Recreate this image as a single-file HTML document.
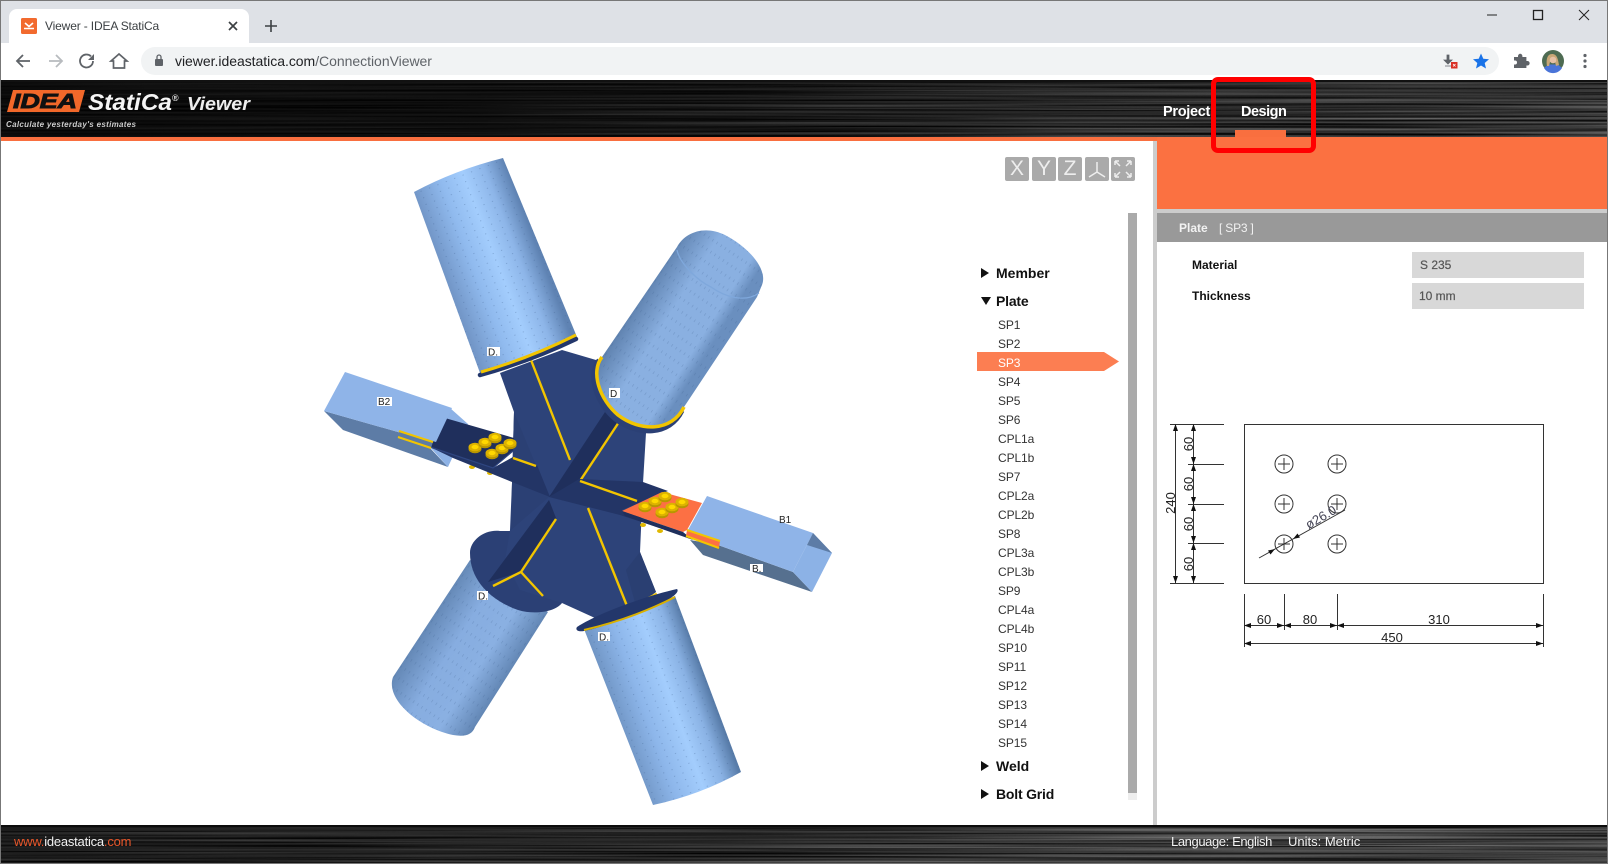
<!DOCTYPE html>
<html><head><meta charset="utf-8"><title>Viewer - IDEA StatiCa</title>
<style>
html,body{margin:0;padding:0;width:1608px;height:864px;overflow:hidden;background:#fff;font-family:"Liberation Sans",sans-serif}
.a{position:absolute}
.t{position:absolute;white-space:nowrap;line-height:16px}
.btn{position:absolute;top:157px;width:24px;height:24px;background:#aaa;border-radius:2px;color:#eee;font-size:21px;line-height:24px;text-align:center}
.m{position:absolute;left:996px;font-weight:bold;font-size:14px;color:#111;line-height:16px}
.list{position:absolute;left:998px;top:316px;font-size:12px;line-height:19px;color:#333;letter-spacing:-.1px}
.list div{height:19px}
</style></head>
<body>
<div class="a" style="left:0;top:0;width:1608px;height:43px;background:#dee1e6"></div>
<div class="a" style="left:9px;top:9px;width:240px;height:34px;background:#fff;border-radius:8px 8px 0 0"></div>
<div class="a" style="left:0;top:43px;width:1608px;height:37px;background:#fff"></div>
<div class="a" style="left:141px;top:47px;width:1358px;height:28px;background:#f1f3f4;border-radius:14px"></div>
<svg class="a" style="left:21px;top:18px" width="16" height="16" viewBox="0 0 16 16"><rect width="16" height="16" rx="1.5" fill="#f26a2e"/><path d="M3 10.5H13M4 5l4 3.5L12 5" fill="none" stroke="#fff" stroke-width="1.6"/></svg>
<div class="t" style="left:45px;top:18px;font-size:12px;color:#3c4043;letter-spacing:-.15px">Viewer - IDEA StatiCa</div>
<svg class="a" style="left:226px;top:19px" width="14" height="14" viewBox="0 0 14 14"><path d="M3 3l8 8M11 3l-8 8" stroke="#3c4043" stroke-width="1.7" fill="none"/></svg>
<svg class="a" style="left:264px;top:19px" width="14" height="14" viewBox="0 0 14 14"><path d="M7 1v12M1 7h12" stroke="#3c4043" stroke-width="1.6" fill="none"/></svg>
<svg class="a" style="left:0;top:43px" width="240" height="37" viewBox="0 43 240 37">
<path d="M30 61H17M23 55l-6 6 6 6" fill="none" stroke="#5f6368" stroke-width="1.8"/>
<path d="M49 61H62M56 55l6 6-6 6" fill="none" stroke="#b8bbbf" stroke-width="1.8"/>
<path d="M93 61a6.5 6.5 0 1 1-2-4.7" fill="none" stroke="#5f6368" stroke-width="1.8"/><path d="M94 54v6h-6z" fill="#5f6368"/>
<path d="M119 54l-8 7h2.500v7h11v-7h2.500z" fill="none" stroke="#5f6368" stroke-width="1.7"/>
<rect x="155" y="59" width="8" height="7" rx="1" fill="#5f6368"/><path d="M157 59v-2a2 2 0 0 1 4 0v2" fill="none" stroke="#5f6368" stroke-width="1.300"/>
</svg>
<div class="t" style="left:175px;top:53px;font-size:14px;color:#202124;letter-spacing:-.03px">viewer.ideastatica.com<span style="color:#5f6368">/ConnectionViewer</span></div>
<svg class="a" style="left:1430px;top:0" width="178" height="80" viewBox="1430 0 178 80">
<path d="M1487 15h10M1579 10l10 10M1589 10l-10 10" stroke="#222" stroke-width="1" fill="none"/><rect x="1533.500" y="10.500" width="9" height="9" fill="none" stroke="#222" stroke-width="1.300"/>
<path d="M1449 55v5h3l-4 4-4-4h3v-5zM1445 66h6" fill="#5f6368" stroke="#5f6368" stroke-width=".8"/><rect x="1451" y="62" width="6.500" height="6.500" fill="#d93025"/><path d="M1453 64l2.500 2.500M1455.500 64l-2.500 2.500" stroke="#fff" stroke-width=".8"/>
<path d="M1481 53.500l2.300 5.200 5.700.5-4.300 3.800 1.300 5.500-5-3-5 3 1.300-5.500-4.300-3.800 5.700-.5z" fill="#1a73e8"/>
<path d="M1515 57h4v-1a2.200 2.200 0 0 1 4.400 0v1h4v4h1a2.200 2.200 0 0 1 0 4.500h-1v2.500h-12.400v-3.500h1a2 2 0 0 0 0-4h-1z" fill="#5f6368" transform="translate(-1 0)"/>
<circle cx="1553" cy="61" r="11" fill="#4e6b52"/><path d="M1544 68a10.500 10.500 0 0 0 18 0l-4-3.500h-10z" fill="#4a74d8"/><path d="M1547 66c-1-6 0-12 5-12s6 5 7 11l-3 1-1-4h-5l-1 4z" fill="#c9a777"/><circle cx="1553" cy="60" r="3.300" fill="#e6c0a5"/>
<circle cx="1585" cy="55.500" r="1.600" fill="#5f6368"/><circle cx="1585" cy="61" r="1.600" fill="#5f6368"/><circle cx="1585" cy="66.500" r="1.600" fill="#5f6368"/>
</svg>

<!-- textured bars -->
<svg class="a" style="left:0;top:80px" width="1608" height="57"><defs><filter id="n1" x="0" y="0" width="100%" height="100%" color-interpolation-filters="sRGB"><feTurbulence type="fractalNoise" baseFrequency="0.002 0.5" numOctaves="3" seed="7"/><feColorMatrix values=".7 0 0 0 -.15 .7 0 0 0 -.15 .7 0 0 0 -.15 0 0 0 0 1"/></filter>
<linearGradient id="hm"><stop offset="0" stop-color="#000" stop-opacity=".8"/><stop offset=".3" stop-color="#000" stop-opacity=".72"/><stop offset=".65" stop-color="#000" stop-opacity=".25"/><stop offset="1" stop-color="#000" stop-opacity="0"/></linearGradient></defs>
<rect width="1608" height="57" filter="url(#n1)"/><rect width="1608" height="57" fill="url(#hm)"/><rect width="1608" height="2" fill="#111"/></svg>
<div class="a" style="left:0;top:137px;width:1608px;height:4px;background:#f96f3f"></div>
<svg class="a" style="left:0;top:825px" width="1608" height="39"><defs><filter id="n2" x="0" y="0" width="100%" height="100%" color-interpolation-filters="sRGB"><feTurbulence type="fractalNoise" baseFrequency="0.002 0.5" numOctaves="3" seed="21"/><feColorMatrix values=".7 0 0 0 -.11 .7 0 0 0 -.11 .7 0 0 0 -.11 0 0 0 0 1"/></filter>
<linearGradient id="fm"><stop offset="0" stop-color="#000" stop-opacity=".55"/><stop offset=".45" stop-color="#000" stop-opacity=".35"/><stop offset=".7" stop-color="#000" stop-opacity="0"/></linearGradient></defs>
<rect width="1608" height="39" filter="url(#n2)"/><rect width="1608" height="39" fill="url(#fm)"/><rect width="1608" height="2" fill="#0c0c0c"/></svg>

<!-- Logo -->
<svg class="a" style="left:0;top:84px" width="300" height="52" viewBox="0 84 300 52">
<path d="M13 90H85L79 112H7Z" fill="#f2682a"/>
<text x="13" y="108" font-family="Liberation Sans" font-weight="bold" font-style="italic" font-size="20" fill="#111" stroke="#111" stroke-width=".9" textLength="64" lengthAdjust="spacingAndGlyphs">IDEA</text>
<text x="88" y="110" font-family="Liberation Sans" font-weight="bold" font-style="italic" font-size="23" fill="#f4f4f4" textLength="84" lengthAdjust="spacingAndGlyphs">StatiCa</text>
<text x="172" y="101" font-family="Liberation Sans" font-weight="bold" font-size="9" fill="#ddd">®</text>
<text x="187" y="110" font-family="Liberation Sans" font-weight="bold" font-style="italic" font-size="18" fill="#eee" textLength="63" lengthAdjust="spacingAndGlyphs">Viewer</text>
<text x="6" y="127" font-family="Liberation Sans" font-weight="bold" font-style="italic" font-size="8" fill="#ccc" textLength="130">Calculate yesterday's estimates</text>
</svg>

<div class="t" style="left:1163px;top:104px;font-size:14.500px;font-weight:bold;color:#fff;letter-spacing:-.3px">Project</div>
<div class="t" style="left:1241px;top:104px;font-size:14.500px;font-weight:bold;color:#fff;letter-spacing:-.5px">Design</div>
<div class="a" style="left:1235px;top:130px;width:51px;height:7px;background:#f96f3f"></div>

<!-- right panel -->
<div class="a" style="left:1153px;top:141px;width:4px;height:684px;background:#ccc"></div>
<div class="a" style="left:1157px;top:137px;width:451px;height:72px;background:#fb7141"></div>
<div class="a" style="left:1157px;top:209px;width:451px;height:4px;background:#ccc"></div>
<div class="a" style="left:1157px;top:213px;width:451px;height:29px;background:#999"></div>
<div class="t" style="left:1179px;top:220px;font-size:12px;font-weight:bold;color:#f2f2f2">Plate</div>
<div class="t" style="left:1219px;top:220px;font-size:12px;color:#f2f2f2;letter-spacing:-.2px">[ SP3 ]</div>
<div class="t" style="left:1192px;top:257px;font-size:12px;font-weight:bold;color:#111">Material</div>
<div class="t" style="left:1192px;top:288px;font-size:12px;font-weight:bold;color:#111">Thickness</div>
<div class="a" style="left:1412px;top:252px;width:172px;height:26px;background:#d8d8d8"></div>
<div class="a" style="left:1412px;top:283px;width:172px;height:26px;background:#d8d8d8"></div>
<div class="t" style="left:1420px;top:257px;font-size:12px;color:#555;-webkit-text-stroke:.2px #555">S 235</div>
<div class="t" style="left:1419px;top:288px;font-size:12px;color:#555;-webkit-text-stroke:.2px #555">10 mm</div>

<!-- drawing -->
<svg class="a" style="left:1150px;top:410px" width="420" height="250" viewBox="1150 410 420 250" font-family="Liberation Sans" font-size="13" fill="#222">
<g stroke="#333" stroke-width="1" fill="none" shape-rendering="crispEdges">
<rect x="1244.500" y="424.500" width="299" height="159"/>
<path d="M1170 424.500H1224M1170 583.500H1224M1188 464.500H1224M1188 504.500H1224M1188 543.500H1224M1175.500 424V583M1193.500 424V583"/>
<path d="M1244.500 594V647M1284.500 594V630M1337.500 594V630M1543.500 594V647M1244 625.500H1543M1244 643.500H1543"/>
</g>
<g stroke="#333" fill="none">
<circle cx="1284" cy="464" r="9"/><circle cx="1337" cy="464" r="9"/><circle cx="1284" cy="504" r="9"/><circle cx="1337" cy="504" r="9"/><circle cx="1284" cy="544" r="9"/><circle cx="1337" cy="544" r="9"/>
<path d="M1278 464h12M1284 458v12M1331 464h12M1337 458v12M1278 504h12M1284 498v12M1331 504h12M1337 498v12M1278 544h12M1284 538v12M1331 544h12M1337 538v12M1259 558L1345 510"/>
</g>
<g fill="#111">
<path d="M1175.500 424l-2.500 7h5zM1175.500 583l-2.500-7h5zM1193.500 424l-2.500 7h5zM1193.500 464l-2.500-7h5zM1193.500 464l-2.500 7h5zM1193.500 504l-2.500-7h5zM1193.500 504l-2.500 7h5zM1193.500 543l-2.500-7h5zM1193.500 543l-2.500 7h5zM1193.500 583l-2.500-7h5z"/>
<path d="M1244 625.500l7-2.500v5zM1284 625.500l-7-2.500v5zM1284 625.500l7-2.500v5zM1337 625.500l-7-2.500v5zM1337 625.500l7-2.500v5zM1543 625.500l-7-2.500v5zM1244 643.500l7-2.500v5zM1543 643.500l-7-2.500v5z"/>
<path d="M1275 549l-7 1.500 2.500 4zM1293 539l7-1.500-2.500-4z"/>
</g>
<text x="1264" y="624" text-anchor="middle">60</text><text x="1310" y="624" text-anchor="middle">80</text><text x="1439" y="624" text-anchor="middle">310</text><text x="1392" y="642" text-anchor="middle">450</text>
<text transform="translate(1175 503) rotate(-90)" text-anchor="middle">240</text>
<text transform="translate(1193 444) rotate(-90)" text-anchor="middle">60</text><text transform="translate(1193 484) rotate(-90)" text-anchor="middle">60</text><text transform="translate(1193 524) rotate(-90)" text-anchor="middle">60</text><text transform="translate(1193 564) rotate(-90)" text-anchor="middle">60</text>
<text transform="translate(1323 521) rotate(-30)" text-anchor="middle" fill="#445">ø26.0</text>
</svg>

<!-- view buttons -->
<div class="btn" style="left:1005px">X</div><div class="btn" style="left:1032px">Y</div><div class="btn" style="left:1058px">Z</div>
<div class="btn" style="left:1085px"><svg width="24" height="24" style="display:block"><path d="M12 5v10M12 15l-8 5M12 15l8 5" stroke="#eee" stroke-width="1.500" fill="none"/></svg></div>
<div class="btn" style="left:1111px"><svg width="24" height="24" style="display:block"><path d="M4 4l5 5M4 4h4M4 4v4M20 4l-5 5M20 4h-4M20 4v4M4 20l5-5M4 20h4M4 20v-4M20 20l-5-5M20 20h-4M20 20v-4" stroke="#eee" stroke-width="1.500" fill="none"/></svg></div>

<!-- scrollbar -->
<div class="a" style="left:1128px;top:213px;width:9px;height:587px;background:#eee"></div>
<div class="a" style="left:1128px;top:213px;width:9px;height:580px;background:#aaa"></div>

<!-- menu -->
<svg class="a" style="left:975px;top:260px" width="20" height="550" viewBox="975 260 20 550"><path d="M981 268l8 5-8 5zM981 297h10l-5 8zM981 761l8 5-8 5zM981 789l8 5-8 5z" fill="#111"/></svg>
<div class="m" style="left:996px;top:265px">Member</div>
<div class="m" style="left:996px;top:293px;letter-spacing:-.2px">Plate</div>
<div class="m" style="left:996px;top:758px">Weld</div>
<div class="m" style="left:996px;top:786px;letter-spacing:-.2px">Bolt Grid</div>
<svg class="a" style="left:977px;top:352px" width="142" height="19"><path d="M0 0H127L142 9.500 127 19H0Z" fill="#fc7e52"/></svg>
<div class="list">
<div>SP1</div><div>SP2</div><div style="color:#fff">SP3</div><div>SP4</div><div>SP5</div><div>SP6</div><div>CPL1a</div><div>CPL1b</div><div>SP7</div><div>CPL2a</div><div>CPL2b</div><div>SP8</div><div>CPL3a</div><div>CPL3b</div><div>SP9</div><div>CPL4a</div><div>CPL4b</div><div>SP10</div><div>SP11</div><div>SP12</div><div>SP13</div><div>SP14</div><div>SP15</div>
</div>

<!-- 3D model -->
<svg class="a" style="left:300px;top:140px" width="560" height="680" viewBox="300 140 560 680" font-family="Liberation Sans" font-size="10" fill="#222">
<defs>
<linearGradient id="g1" gradientUnits="userSpaceOnUse" x1="414" y1="192" x2="503" y2="158"><stop offset="0" stop-color="#7397c8"/><stop offset=".3" stop-color="#90baee"/><stop offset=".55" stop-color="#a3cdfd"/><stop offset=".78" stop-color="#8db5e8"/><stop offset="1" stop-color="#5f83b3"/></linearGradient>
<linearGradient id="g4" gradientUnits="userSpaceOnUse" x1="584" y1="629" x2="675" y2="596"><stop offset="0" stop-color="#7095c4"/><stop offset=".3" stop-color="#8db6ea"/><stop offset=".6" stop-color="#a3cdfd"/><stop offset=".82" stop-color="#8ab2e4"/><stop offset="1" stop-color="#587ca9"/></linearGradient>
<linearGradient id="g2" gradientUnits="userSpaceOnUse" x1="618" y1="332" x2="691" y2="378"><stop offset="0" stop-color="#5f82af"/><stop offset=".4" stop-color="#8ab0e1"/><stop offset=".85" stop-color="#8ab0e1"/><stop offset="1" stop-color="#6a8fbf"/></linearGradient>
<linearGradient id="g3" gradientUnits="userSpaceOnUse" x1="432" y1="620" x2="510" y2="670"><stop offset="0" stop-color="#668ab8"/><stop offset=".35" stop-color="#87ade0"/><stop offset=".7" stop-color="#8ab0e2"/><stop offset="1" stop-color="#6488b6"/></linearGradient>
<pattern id="d1" width="9" height="7" patternUnits="userSpaceOnUse" patternTransform="rotate(-21)"><rect width="1.200" height=".8" fill="#3c5c8c" opacity=".4"/></pattern>
<pattern id="d2" width="11" height="5" patternUnits="userSpaceOnUse" patternTransform="rotate(-56)"><rect width="3" height=".6" fill="#3c5c8c" opacity=".3"/></pattern>
<g id="bolt"><ellipse cx="0" cy="2" rx="6.500" ry="4.300" fill="#b89600"/><ellipse cx="0" cy="0" rx="6.500" ry="4.300" fill="#dcb200"/><ellipse cx="0" cy="0" rx="3.500" ry="2.200" fill="#ffd800"/></g>
</defs>

<!-- lower-left cylinder D3 -->
<path d="M470 560L393 677C385 700 420 728 453 735C465 737 472 735 475 727L548 612Z" fill="url(#g3)"/>
<path d="M470 560L393 677C385 700 420 728 453 735C465 737 472 735 475 727L548 612Z" fill="url(#d2)"/>
<path d="M470 553C470 540 485 529 500 531L520 531L540 570L562 603C555 612 535 615 518 610C490 600 470 580 470 553Z" fill="#2b4075"/>

<!-- body -->
<path d="M500 373L562 350L596 360L646 433L643 483L640 552L656 592L640 604L595 618L562 603L520 590L505 560L510 530L512 483L514 412Z" fill="#2d4379"/>
<path d="M514 412L549 497L511 530L512 483Z" fill="#2b4074"/>
<path d="M640 552L656 592L636 606L626 570Z" fill="#2a3f72"/>
<path d="M549 497L605 412L618 422L579 480Z" fill="#1f2f5c"/>
<path d="M549 500L488 582L520 572L556 518Z" fill="#1f2f5c"/>
<g fill="none" stroke="#f2c500" stroke-width="2.400">
<path d="M531 360L570 460"/>
<path d="M619 422L580 481L637 501"/>
<path d="M556 519L521 572L493 586M521 572L543 596"/>
<path d="M588 508L627 606"/>
</g>

<!-- B2 rear -->
<path d="M324 411L398 432L430 448L448 467L343 430Z" fill="#5d7ca6"/>
<path d="M450 408L468 424L448 467L430 447L445 418Z" fill="#8db2e6"/>
<!-- left beam plate -->
<ellipse cx="472" cy="467" rx="3" ry="2" fill="#e0b800"/><ellipse cx="490" cy="473" rx="3" ry="2" fill="#e0b800"/>
<path d="M430 447L493 468L513 457L537 465L550 497L512 482L453 458Z" fill="#233566"/>
<path d="M445 418L514 438L513 451L493 468L430 447Z" fill="#1f2f5c"/>
<path d="M430 447L493 468L513 451" stroke="#2e4580" stroke-width="1.200" fill="none"/>
<path d="M513 458L536 466" stroke="#f2c500" stroke-width="2.400"/>
<!-- right beam plate -->
<ellipse cx="643" cy="525" rx="3" ry="2" fill="#e0b800"/><ellipse cx="660" cy="531" rx="3" ry="2" fill="#e0b800"/>
<path d="M549 497L579 479L643 482L668 491L622 510L690 538L620 515Z" fill="#233566"/>
<path d="M580 481L637 501" stroke="#f2c500" stroke-width="2.400"/>
<path d="M622 511L662 492L702 503L687 530L683 532Z" fill="#fc7044"/>
<path d="M622 511L683 532L693 540L625 516Z" fill="#1f2f5c"/>
<use href="#bolt" x="475" y="447"/><use href="#bolt" x="485" y="442"/><use href="#bolt" x="495" y="437"/><use href="#bolt" x="492" y="453"/><use href="#bolt" x="502" y="448"/><use href="#bolt" x="510" y="443"/>
<use href="#bolt" x="645" y="506"/><use href="#bolt" x="655" y="501"/><use href="#bolt" x="665" y="496"/><use href="#bolt" x="662" y="512"/><use href="#bolt" x="672" y="507"/><use href="#bolt" x="682" y="502"/>

<!-- B2 top -->
<path d="M345 372L452 408L436 442L398 432L324 411Z" fill="#8fb4e8"/>
<path d="M399 431L433 442L431 448L398 438Z" fill="#5d7ca6"/>
<path d="M399 431L433 442M398 437L431 448" stroke="#f2c500" stroke-width="2.200" fill="none"/>
<!-- B1 -->
<path d="M690 540L718 545L793 572L812 592L703 555Z" fill="#56708f"/>
<path d="M707 496L813 533L793 572L718 545L688 530Z" fill="#8fb4e8"/>
<path d="M813 533L832 553L812 592L793 572Z" fill="#8cb2e6"/>
<path d="M813 533L832 553L807 545Z" fill="#5d7ca6"/>
<path d="M687 530L720 541L719 547L686 536Z" fill="#fc7044"/>
<path d="M687 530L720 541M686 536L719 548" stroke="#f2c500" stroke-width="2" fill="none"/>

<!-- D1 cylinder -->
<path d="M414 192Q455 170 503 158L577 337Q530 358 480 373Z" fill="url(#g1)"/>
<path d="M414 192Q455 170 503 158L577 337Q530 358 480 373Z" fill="url(#d1)"/>
<path d="M480 375Q530 361 576 339" stroke="#23376b" stroke-width="4.500" fill="none" stroke-linecap="round"/>
<path d="M481 372Q530 358 576 335" stroke="#f2c500" stroke-width="3" fill="none"/>

<!-- D2 cylinder -->
<path d="M602 357C590 372 600 400 618 415C640 432 672 432 684 407" stroke="#2b4075" stroke-width="6" fill="none" transform="translate(-2.500 3.500)"/>
<path d="M677 247C685 232 705 225 725 235C750 248 768 270 762 285L757 297L684 407C672 432 640 432 618 415C600 400 590 372 602 357Z" fill="url(#g2)"/>
<path d="M677 247C685 232 705 225 725 235C750 248 768 270 762 285L757 297L684 407C672 432 640 432 618 415C600 400 590 372 602 357Z" fill="url(#d2)"/>
<path d="M677 250C680 265 700 282 711 287C725 297 745 303 759 293" stroke="#7fa8dc" stroke-width="1.300" fill="none"/>
<path d="M602 357C590 372 600 400 618 415C640 432 672 432 684 407" stroke="#f2c500" stroke-width="3.500" fill="none"/>

<!-- D4 cylinder -->
<path d="M584 629Q632 618 675 596L741 772Q700 795 653 805Z" fill="url(#g4)"/>
<path d="M584 629Q632 618 675 596L741 772Q700 795 653 805Z" fill="url(#d1)"/>
<path d="M595 620L637 605M640 603L657 594" stroke="#f2c500" stroke-width="3" fill="none"/>
<path d="M577 627C600 612 650 595 677 589C680 592 672 598 660 604C640 614 600 628 584 631C578 632 575 630 577 627Z" fill="#23376b"/>
<path d="M584 630Q632 619 675 597" stroke="#d9b000" stroke-width="2" fill="none"/>

<!-- labels -->
<g fill="#fff"><rect x="487" y="347" width="13" height="9"/><rect x="377" y="397" width="15" height="9"/><rect x="609" y="388" width="11" height="10"/><rect x="750" y="564" width="13" height="8"/><rect x="477" y="591" width="11" height="9"/><rect x="598" y="632" width="12" height="9"/></g>
<text x="488" y="355.500">D.</text><text x="378" y="405">B2</text><text x="610" y="397">D</text><text x="779" y="523">B1</text><text x="752" y="572">B.</text><text x="478" y="599.500">D.</text><text x="599" y="640.500">D.</text>
</svg>

<!-- red highlight -->
<div class="a" style="left:1211px;top:77px;width:95px;height:66px;border:5px solid #f00;border-radius:7px"></div>

<!-- footer text -->
<div class="t" style="left:14px;top:834px;font-size:13px;color:#e8562a;letter-spacing:-.22px">www.<span style="color:#f2f2f2">ideastatica</span>.com</div>
<div class="t" style="left:1171px;top:834px;font-size:13px;color:#f2f2f2;letter-spacing:-.4px">Language: English</div>
<div class="t" style="left:1288px;top:834px;font-size:13px;color:#f2f2f2">Units: Metric</div>

<!-- window border -->
<div class="a" style="left:0;top:0;width:1608px;height:1px;background:#777"></div>
<div class="a" style="left:0;top:0;width:1px;height:864px;background:#777"></div>
<div class="a" style="left:1607px;top:0;width:1px;height:864px;background:#777"></div>
<div class="a" style="left:0;top:863px;width:1608px;height:1px;background:#777"></div>
</body></html>
